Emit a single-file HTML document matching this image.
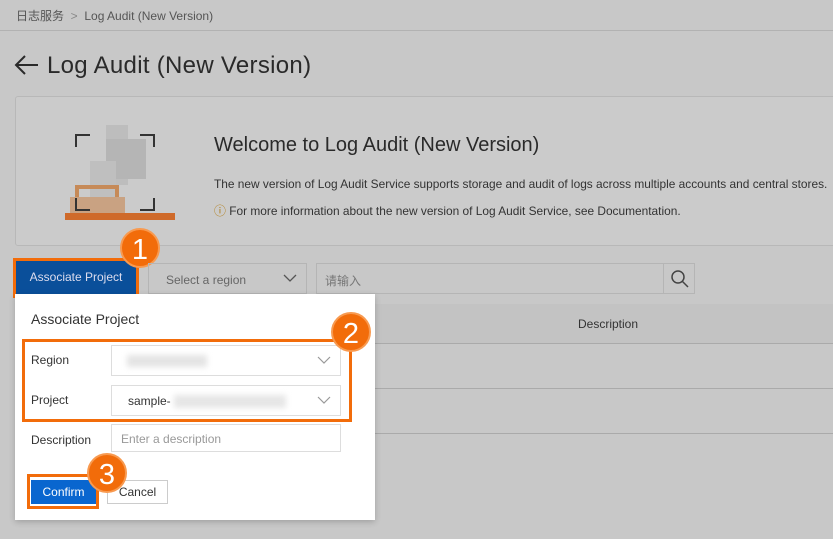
<!DOCTYPE html>
<html><head><meta charset="utf-8"><style>
*{box-sizing:border-box;margin:0;padding:0}
body{width:833px;height:539px;overflow:hidden;background:#c8c8c8;font-family:"Liberation Sans","Noto Sans CJK SC",sans-serif;position:relative;color:#333}
.a{position:absolute}
.badge{position:absolute;width:40px;height:40px;border-radius:50%;background:#f26c0a;color:#fff;font-size:29px;text-align:center;line-height:40px;border:2px solid #f89a50}
.hl{position:absolute;border:3px solid #f26c0a}
.chev{position:absolute;right:9px;top:10px}
</style></head><body>
<div class="a" style="left:0;top:0;width:833px;height:31px;border-bottom:1px solid #b2b2b2"></div>
<div class="a" style="left:16px;top:7px;font-size:12px;color:#555">日志服务 &nbsp;<span style="color:#888">&gt;</span>&nbsp; Log Audit (New Version)</div>
<svg class="a" style="left:14px;top:55px" width="26" height="20"><path d="M2 10H24M11 1L2 10L11 19" fill="none" stroke="#2a2a2a" stroke-width="2"/></svg>
<div class="a" style="left:47px;top:52px;font-size:24px;color:#2a2a2a;letter-spacing:0.3px">Log Audit (New Version)</div>
<div class="a" style="left:15px;top:96px;width:830px;height:150px;border:1px solid #b8b8b8;border-radius:3px;background:#cbcbcb"></div>
<svg class="a" style="left:40px;top:125px" width="150" height="95">
<rect x="66" y="0" width="22" height="60" fill="#bdbdbd"/><rect x="66" y="14" width="40" height="40" fill="#b5b5b5"/>
<rect x="50" y="36" width="26" height="40" fill="#bfbfbf"/>
<rect x="37" y="62" width="40" height="12" fill="none" stroke="#c68a58" stroke-width="4"/>
<rect x="30" y="72" width="55" height="20" fill="#c9a282"/>
<rect x="25" y="88" width="110" height="7" fill="#cf6a2a"/>
<path d="M36 22V10H50M100 10H114V22M36 73V85H50M100 85H114V73" fill="none" stroke="#333" stroke-width="2"/>
</svg>
<div class="a" style="left:214px;top:134px;font-size:20px;color:#2a2a2a">Welcome to Log Audit (New Version)</div>
<div class="a" style="left:214px;top:177px;font-size:11.9px;color:#333">The new version of Log Audit Service supports storage and audit of logs across multiple accounts and central stores.</div>
<div class="a" style="left:214px;top:202px;font-size:11.9px;color:#333"><span style="color:#b07a10">ⓘ</span> For more information about the new version of Log Audit Service, see Documentation.</div>
<div class="a" style="left:16px;top:261px;width:120px;height:33px;background:#0a4f9a;color:#dde;font-size:12px;text-align:center;line-height:33px">Associate Project</div>
<div class="hl" style="left:13px;top:258px;width:126px;height:40px"></div>
<div class="badge" style="left:120px;top:228px">1</div>
<div class="a" style="left:148px;top:263px;width:159px;height:31px;border:1px solid #b5b5b5;font-size:12px;color:#666;padding:9px 0 0 17px">Select a region<svg class="chev" width="14" height="9"><path d="M1 1L7 7L13 1" fill="none" stroke="#555" stroke-width="1.3"/></svg></div>
<div class="a" style="left:316px;top:263px;width:379px;height:31px;border:1px solid #b5b5b5;font-size:12px;color:#777;padding:8px 0 0 8px">请输入</div>
<div class="a" style="left:663px;top:263px;width:32px;height:31px;border-left:1px solid #b5b5b5"></div>
<svg class="a" style="left:670px;top:269px" width="20" height="20"><circle cx="8" cy="8" r="6" fill="none" stroke="#444" stroke-width="1.5"/><path d="M12.5 12.5L18 18" stroke="#444" stroke-width="1.5"/></svg>
<div class="a" style="left:375px;top:304px;width:458px;height:40px;background:#c3c3c3;border-bottom:1px solid #aaa"></div>
<div class="a" style="left:578px;top:317px;font-size:12px;color:#333">Description</div>
<div class="a" style="left:375px;top:388px;width:458px;height:1px;background:#aaa"></div>
<div class="a" style="left:375px;top:433px;width:458px;height:1px;background:#aaa"></div>
<div class="a" style="left:15px;top:294px;width:360px;height:226px;background:#fff;box-shadow:0 2px 6px rgba(0,0,0,.2)"></div>
<div class="a" style="left:31px;top:311px;font-size:14px;color:#333">Associate Project</div>
<div class="a" style="left:31px;top:353px;font-size:12px">Region</div>
<div class="a" style="left:111px;top:345px;width:230px;height:31px;border:1px solid #ddd"><div class="a" style="left:15px;top:9px;width:80px;height:12px;background:#e4e4e4;filter:blur(3px)"></div><svg class="chev" width="14" height="9"><path d="M1 1L7 7L13 1" fill="none" stroke="#999" stroke-width="1.2"/></svg></div>
<div class="a" style="left:31px;top:393px;font-size:12px">Project</div>
<div class="a" style="left:111px;top:385px;width:230px;height:31px;border:1px solid #ddd;font-size:12px;padding:8px 0 0 16px">sample-<div class="a" style="left:62px;top:9px;width:112px;height:13px;background:#e6e6e6;filter:blur(3px)"></div><svg class="chev" width="14" height="9"><path d="M1 1L7 7L13 1" fill="none" stroke="#999" stroke-width="1.2"/></svg></div>
<div class="hl" style="left:22px;top:339px;width:330px;height:83px"></div>
<div class="badge" style="left:331px;top:312px">2</div>
<div class="a" style="left:31px;top:433px;font-size:12px">Description</div>
<div class="a" style="left:111px;top:424px;width:230px;height:28px;border:1px solid #ddd;font-size:12px;color:#999;padding:7px 0 0 9px">Enter a description</div>
<div class="a" style="left:31px;top:480px;width:65px;height:24px;background:#0966cf;color:#fff;font-size:12px;text-align:center;line-height:24px">Confirm</div>
<div class="hl" style="left:27px;top:474px;width:72px;height:35px"></div>
<div class="a" style="left:107px;top:480px;width:61px;height:24px;border:1px solid #ccc;font-size:12px;text-align:center;line-height:22px">Cancel</div>
<div class="badge" style="left:87px;top:453px">3</div>
</body></html>
